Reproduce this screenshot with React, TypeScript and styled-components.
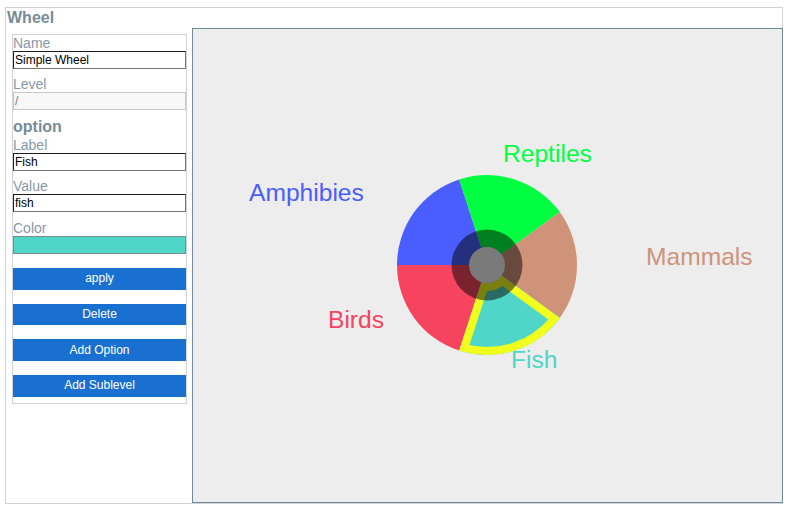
import React from "react";
import styled, { createGlobalStyle } from "styled-components";

const GlobalStyle = createGlobalStyle`
  html, body {
    margin: 0;
    padding: 0;
    background: #ffffff;
    font-family: "Liberation Sans", Arial, sans-serif;
  }
`;

const Frame = styled.div`
  box-sizing: border-box;
  margin: 7px 0 0 5px;
  width: 778px;
  height: 497px;
  border: 1px solid #d3d3d3;
  display: flex;
  flex-direction: column;
`;

const Title = styled.div`
  height: 20px;
  line-height: 19px;
  padding-left: 1px;
  font-size: 16px;
  font-weight: bold;
  color: #788b98;
`;

const Body = styled.div`
  flex: 1;
  display: flex;
  align-items: flex-start;
`;

const Panel = styled.div`
  box-sizing: border-box;
  width: 175px;
  margin: 6px 0 0 6px;
  border: 1px solid #d3d3d3;
  padding: 0 0 6px;
  display: flex;
  flex-direction: column;
`;

const FieldLabel = styled.label<{ $gap?: number }>`
  display: block;
  margin-top: ${(p) => p.$gap ?? 0}px;
  font-size: 14px;
  line-height: 16px;
  color: #8798a7;
`;

const Heading = styled.div`
  margin-top: 6px;
  font-size: 16px;
  line-height: 21px;
  font-weight: bold;
  color: #788b98;
`;

const TextInput = styled.input`
  box-sizing: border-box;
  display: block;
  width: 173px;
  height: 18px;
  margin: 0;
  padding: 0 1px;
  font-family: "Liberation Sans", Arial, sans-serif;
  font-size: 12px;
  color: #000;
  background: #ffffff;
  border: 1px solid;
  border-color: #1c1c1c #767676 #767676 #1c1c1c;
  outline: none;
  &:disabled {
    background: #f8f8f8;
    border-color: #c8c8c8;
    color: #6f7a88;
  }
`;

const Swatch = styled.div<{ $color: string }>`
  box-sizing: border-box;
  width: 173px;
  height: 18px;
  background: ${(p) => p.$color};
  border: 1px solid #7f8a8a;
`;

const ActionButton = styled.button`
  box-sizing: border-box;
  display: block;
  width: 173px;
  height: 21.67px;
  margin: 14px 0 0;
  padding: 0;
  border: none;
  background: #1a70d0;
  color: #ffffff;
  font-family: "Liberation Sans", Arial, sans-serif;
  font-size: 12px;
  line-height: 21px;
  text-align: center;
  cursor: pointer;
`;

const Canvas = styled.div`
  box-sizing: border-box;
  flex: 1;
  align-self: stretch;
  margin: 0 -1px 0 5px;
  border: 1px solid #6f8a94;
  background: #ededed;
  overflow: hidden;
`;

const Drawing = styled.svg`
  display: block;
  width: 100%;
  height: 100%;
`;

const WheelLabel = styled.text`
  font-family: "Liberation Sans", Arial, sans-serif;
  font-size: 24.6px;
`;

const CX = 294;
const CY = 236;
const R = 90;

type Slice = { name: string; color: string; from: number; to: number; lx: number; ly: number };

const slices: Slice[] = [
  { name: "Amphibies", color: "#4a5eff", from: 180, to: 252, lx: 56, ly: 172 },
  { name: "Reptiles", color: "#00ff40", from: 252, to: 324, lx: 310, ly: 133 },
  { name: "Mammals", color: "#cf937a", from: -36, to: 36, lx: 453, ly: 236 },
  { name: "Fish", color: "#4fd6c8", from: 36, to: 108, lx: 318, ly: 339 },
  { name: "Birds", color: "#f7445e", from: 108, to: 180, lx: 135, ly: 299 },
];

const rad = (d: number) => (d * Math.PI) / 180;
const pt = (r: number, a: number) => [CX + r * Math.cos(rad(a)), CY + r * Math.sin(rad(a))];

function piePath(from: number, to: number, r: number) {
  const [x1, y1] = pt(r, from);
  const [x2, y2] = pt(r, to);
  return `M ${CX} ${CY} L ${x1} ${y1} A ${r} ${r} 0 0 1 ${x2} ${y2} Z`;
}

function insetSector(from: number, to: number, rIn: number, rOut: number, inset: number) {
  const at = (r: number, a: number, side: 1 | -1) => {
    const u = [Math.cos(rad(a)), Math.sin(rad(a))];
    const n = side === 1 ? [-u[1], u[0]] : [u[1], -u[0]];
    const t = Math.sqrt(r * r - inset * inset);
    return [CX + t * u[0] + inset * n[0], CY + t * u[1] + inset * n[1]];
  };
  const [ox1, oy1] = at(rOut, from, 1);
  const [ox2, oy2] = at(rOut, to, -1);
  const [ix2, iy2] = at(rIn, to, -1);
  const [ix1, iy1] = at(rIn, from, 1);
  return `M ${ox1} ${oy1} A ${rOut} ${rOut} 0 0 1 ${ox2} ${oy2} L ${ix2} ${iy2} A ${rIn} ${rIn} 0 0 0 ${ix1} ${iy1} Z`;
}

function Wheel() {
  const fish = slices.find((s) => s.name === "Fish")!;
  return (
    <Drawing viewBox="0 0 589 473" preserveAspectRatio="xMinYMin meet">
      {slices.map((s) => (
        <path key={s.name} d={piePath(s.from, s.to, R)} fill={s.color} />
      ))}
      <path
        d={insetSector(fish.from, fish.to, 22, 86, 4)}
        fill={fish.color}
        stroke="#f0ff1e"
        strokeWidth={8}
        strokeLinejoin="miter"
      />
      <circle cx={CX} cy={CY} r={35.5} fill="rgba(0,0,0,0.5)" />
      <circle cx={CX} cy={CY} r={18} fill="#7a7a7a" />
      {slices.map((s) => (
        <WheelLabel key={s.name + "-label"} x={s.lx} y={s.ly} fill={s.color}>
          {s.name}
        </WheelLabel>
      ))}
    </Drawing>
  );
}

export default function App() {
  return (
    <>
      <GlobalStyle />
      <Frame>
        <Title>Wheel</Title>
        <Body>
          <Panel>
            <FieldLabel>Name</FieldLabel>
            <TextInput defaultValue="Simple Wheel" />
            <FieldLabel $gap={7}>Level</FieldLabel>
            <TextInput defaultValue="/" disabled />
            <Heading>option</Heading>
            <FieldLabel>Label</FieldLabel>
            <TextInput defaultValue="Fish" />
            <FieldLabel $gap={7}>Value</FieldLabel>
            <TextInput defaultValue="fish" />
            <FieldLabel $gap={8}>Color</FieldLabel>
            <Swatch $color="#4fd6c8" />
            <ActionButton>apply</ActionButton>
            <ActionButton>Delete</ActionButton>
            <ActionButton>Add Option</ActionButton>
            <ActionButton>Add Sublevel</ActionButton>
          </Panel>
          <Canvas>
            <Wheel />
          </Canvas>
        </Body>
      </Frame>
    </>
  );
}
